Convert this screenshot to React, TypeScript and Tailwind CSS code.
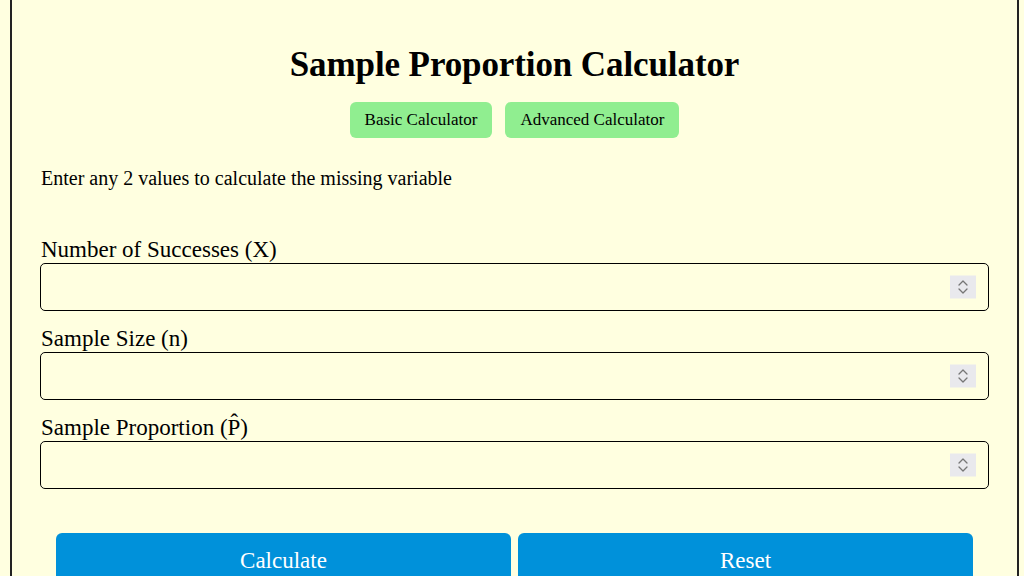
const fields = [
  { id: "successes", label: "Number of Successes (X)" },
  { id: "size", label: "Sample Size (n)" },
  { id: "proportion", label: "Sample Proportion (P\u0302)" },
];

function Spinner() {
  return (
    <div className="pointer-events-none absolute right-[13px] top-1/2 flex h-[23px] w-[26px] -translate-y-1/2 flex-col items-center justify-center bg-[#e9e9ed]">
      <svg width="12" height="17" viewBox="0 0 12 17" fill="none" stroke="#767676" strokeWidth="1.3" strokeLinecap="round" strokeLinejoin="round">
        <path d="M2 6.5 L6 2.5 L10 6.5" />
        <path d="M2 10.5 L6 14.5 L10 10.5" />
      </svg>
    </div>
  );
}

export default function App() {
  return (
    <div className="h-screen overflow-hidden bg-[#ffffe0] font-['Liberation_Serif',serif] text-black">
      <div className="ml-[10px] w-[1009px] min-h-[576px] border-x-2 border-[#222] bg-[#ffffe0] px-[28px] pt-[45px] pb-6">
        <h1 className="text-center text-[35px] font-bold leading-[40px] tracking-[-0.1px]">Sample Proportion Calculator</h1>

        <div className="mt-[17px] flex justify-center gap-[13px]">
          <button className="rounded-md bg-[#90ee90] px-[15px] py-[9px] text-[17px] leading-[18px]">Basic Calculator</button>
          <button className="rounded-md bg-[#90ee90] px-[15px] py-[9px] text-[17px] leading-[18px]">Advanced Calculator</button>
        </div>

        <p className="mt-[28px] pl-px text-[20px] leading-[24px]">Enter any 2 values to calculate the missing variable</p>

        <div className="mt-[46px] flex flex-col gap-[14px]">
          {fields.map(({ id, label }) => (
            <div key={id}>
              <label htmlFor={id} className="block pl-px text-[23px] leading-[27px]">{label}</label>
              <div className="relative">
                <input id={id} type="text" inputMode="decimal" className="block h-[48px] w-full rounded-[5px] border border-black bg-transparent px-2 text-[18px] outline-none" />
                <Spinner />
              </div>
            </div>
          ))}
        </div>

        <div className="mt-[44px] flex gap-[7px] px-4">
          <button className="h-[60px] flex-1 rounded-md bg-[#0091da] pb-[19px] pt-[14px] text-[23px] leading-[27px] text-white">Calculate</button>
          <button className="h-[60px] flex-1 rounded-md bg-[#0091da] pb-[19px] pt-[14px] text-[23px] leading-[27px] text-white">Reset</button>
        </div>
      </div>
    </div>
  );
}
